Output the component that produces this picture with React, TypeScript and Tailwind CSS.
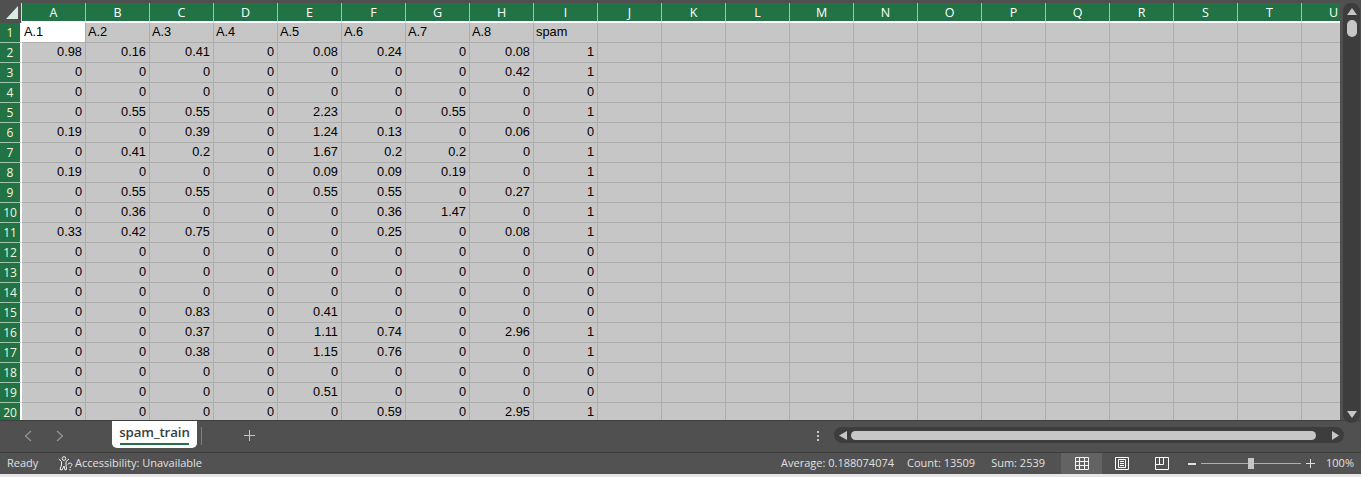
import React from "react";

const cols = "ABCDEFGHIJKLMNOPQRSTU".split("");
const data: (string | number)[][] = [
  ["A.1", "A.2", "A.3", "A.4", "A.5", "A.6", "A.7", "A.8", "spam"],
  [0.98, 0.16, 0.41, 0, 0.08, 0.24, 0, 0.08, 1],
  [0, 0, 0, 0, 0, 0, 0, 0.42, 1],
  [0, 0, 0, 0, 0, 0, 0, 0, 0],
  [0, 0.55, 0.55, 0, 2.23, 0, 0.55, 0, 1],
  [0.19, 0, 0.39, 0, 1.24, 0.13, 0, 0.06, 0],
  [0, 0.41, 0.2, 0, 1.67, 0.2, 0.2, 0, 1],
  [0.19, 0, 0, 0, 0.09, 0.09, 0.19, 0, 1],
  [0, 0.55, 0.55, 0, 0.55, 0.55, 0, 0.27, 1],
  [0, 0.36, 0, 0, 0, 0.36, 1.47, 0, 1],
  [0.33, 0.42, 0.75, 0, 0, 0.25, 0, 0.08, 1],
  [0, 0, 0, 0, 0, 0, 0, 0, 0],
  [0, 0, 0, 0, 0, 0, 0, 0, 0],
  [0, 0, 0, 0, 0, 0, 0, 0, 0],
  [0, 0, 0.83, 0, 0.41, 0, 0, 0, 0],
  [0, 0, 0.37, 0, 1.11, 0.74, 0, 2.96, 1],
  [0, 0, 0.38, 0, 1.15, 0.76, 0, 0, 1],
  [0, 0, 0, 0, 0, 0, 0, 0, 0],
  [0, 0, 0, 0, 0.51, 0, 0, 0, 0],
  [0, 0, 0, 0, 0, 0.59, 0, 2.95, 1],
];

function Cell({ v, selected }: { v?: string | number; selected?: boolean }) {
  const isNum = typeof v === "number";
  return (
    <div
      className={`h-[20px] border-r border-b border-[#adadad] leading-[18px] text-[12.8px] text-black whitespace-nowrap overflow-hidden ${
        isNum ? "text-right pr-[3px]" : "text-left pl-[2px]"
      } ${selected ? "bg-white" : "bg-[#c6c6c6]"}`}
    >
      {v}
    </div>
  );
}

export default function App() {
  return (
    <div className="w-[1361px] h-[477px] overflow-hidden flex flex-col bg-[#505050] font-['Liberation_Sans',Arial,sans-serif]">
      <div className="h-[3px] shrink-0 bg-[#505050]" />
      <div className="flex h-[417px] shrink-0">
        <div className="w-[1340px] h-[417px] overflow-hidden shrink-0 grid grid-cols-[22px_repeat(21,64px)] auto-rows-[20px] content-start">
          {/* corner */}
          <div className="h-[20px] bg-[#505050] border-r border-[#d8d8d8] flex items-start pl-[6px] pt-[3px]">
            <svg width="12" height="13" viewBox="0 0 12 13">
              <polygon points="12,0 12,13 0,13" fill="#d8ece2" />
            </svg>
          </div>
          {cols.map((c) => (
            <div
              key={c}
              className="h-[20px] bg-[#217346] border-r border-[#9fc5ae] border-b-2 border-b-white text-center text-white text-[12.5px] leading-[19px] font-['Open_Sans',sans-serif]"
            >
              {c}
            </div>
          ))}
          {data.map((row, r) => (
            <React.Fragment key={r}>
              <div className="h-[20px] bg-[#217346] border-r-2 border-r-white border-b border-[#9fc5ae] text-center text-[#f5f5dc] text-[12px] leading-[19px] font-['Open_Sans',sans-serif]">
                {r + 1}
              </div>
              {cols.map((c, i) => (
                <Cell key={c} v={row[i]} selected={r === 0 && i === 0} />
              ))}
            </React.Fragment>
          ))}
        </div>
        {/* vertical scrollbar */}
        <div className="relative w-[21px] pl-[3px] pr-[1px]">
          <div className="relative h-[420px] rounded-[8px] bg-[#3d3d3d] flex flex-col items-center">
            <svg width="10" height="7" viewBox="0 0 10 7" className="mt-[5px]">
              <polygon points="5,0 10,7 0,7" fill="#c6c6c6" />
            </svg>
            <div className="mt-[5px] w-[10px] h-[17px] rounded-[5px] bg-[#c6c6c6]" />
            <svg width="10" height="7" viewBox="0 0 10 7" className="mt-auto mb-[5px]">
              <polygon points="0,0 10,0 5,7" fill="#c6c6c6" />
            </svg>
          </div>
        </div>
      </div>

      {/* sheet tab bar */}
      <div className="h-[33px] shrink-0 flex border-t border-[#3d3d3d] border-b border-b-[#3d3d3d] text-[#c6c6c6]">
        <div className="flex items-start pt-[8px] pl-[23px] w-[112px] shrink-0">
          <svg width="10" height="14" viewBox="0 0 10 14" fill="none" stroke="#969696" strokeWidth="1.2">
            <path d="M8 2 L2.5 7 L8 12" />
          </svg>
          <svg width="10" height="14" viewBox="0 0 10 14" fill="none" stroke="#969696" strokeWidth="1.2" className="ml-[22px]">
            <path d="M2 2 L7.5 7 L2 12" />
          </svg>
        </div>
        <div className="w-[85px] h-[27px] shrink-0 bg-white rounded-b-[5px] flex flex-col items-center">
          <div className="text-[13.3px] leading-[20px] mt-[1px] font-semibold text-[#3c3c3c] font-['Open_Sans',sans-serif] tracking-[-0.1px]">spam_train</div>
          <div className="w-[69px] h-[2px] bg-[#217346] mt-[1px]" />
        </div>
        <div className="w-px h-[18px] bg-[#808080] ml-[4px] mt-[6px]" />
        <svg width="11" height="11" viewBox="0 0 11 11" stroke="#c6c6c6" strokeWidth="1" className="ml-[42px] mt-[9px]">
          <path d="M5.5 0 V11 M0 5.5 H11" />
        </svg>
        <div className="ml-[562px] mt-[10px] flex flex-col gap-[2px]">
          <div className="w-[2px] h-[2px] bg-[#c6c6c6]" />
          <div className="w-[2px] h-[2px] bg-[#c6c6c6]" />
          <div className="w-[2px] h-[2px] bg-[#c6c6c6]" />
        </div>
        {/* horizontal scrollbar */}
        <div className="ml-[15px] mt-[6px] w-[510px] h-[16px] rounded-[8px] bg-[#3d3d3d] flex items-center pl-[5px] pr-[5px]">
          <svg width="8" height="9" viewBox="0 0 8 9">
            <polygon points="0,4.5 8,0 8,9" fill="#c6c6c6" />
          </svg>
          <div className="ml-[4px] w-[465px] h-[9px] rounded-[5px] bg-[#c6c6c6]" />
          <svg width="7" height="9" viewBox="0 0 7 9" className="ml-auto">
            <polygon points="7,4.5 0,0 0,9" fill="#c6c6c6" />
          </svg>
        </div>
      </div>

      {/* status bar */}
      <div className="h-[21px] shrink-0 flex items-center justify-between bg-[#525252] text-[11px] text-[#e0e0e0] font-['Open_Sans',sans-serif]">
        <div className="flex items-center">
          <span className="ml-[7px] w-[51px]">Ready</span>
          <svg width="15" height="15" viewBox="0 0 15 15" fill="none" stroke="#f0f0f0" strokeWidth="1">
            <circle cx="6" cy="2.5" r="1.8" />
            <path d="M.8 3 L3.5 5.5 V9 L2 13.5 L4 14 L6 10 L7 14 L8.5 13.5 L8 9 V5.5 L11 3" />
            <path d="M10 8.5 C10 6.6 14 6.6 14 8.7 C14 10.3 12 10.2 12 12 M12 13 V14.5" />
          </svg>
          <span className="ml-[2px]">Accessibility: Unavailable</span>
        </div>
        <div className="flex items-center pr-[7px]">
          <span>Average: 0.188074074</span>
          <span className="ml-[13px]">Count: 13509</span>
          <span className="ml-[16px]">Sum: 2539</span>
          <div className="ml-[16px] w-[41px] h-[21px] bg-[#636363] flex items-center justify-center">
            <svg width="14" height="13" viewBox="0 0 14 13" fill="none" stroke="#f4f4f4" strokeWidth="1">
              <path d="M.5 .5 H13.5 V12.5 H.5 Z M.5 4.5 H13.5 M.5 8.5 H13.5 M4.5 .5 V12.5 M9.5 .5 V12.5" />
            </svg>
          </div>
          <svg width="14" height="13" viewBox="0 0 14 13" fill="none" stroke="#ffffff" strokeWidth="1" className="ml-[13px]">
            <path d="M.5 .5 H13.5 V12.5 H.5 Z M3.5 2.5 H10.5 V10.5 H3.5 Z M5 4.5 H9 M5 6.5 H9 M5 8.5 H9" />
          </svg>
          <svg width="14" height="13" viewBox="0 0 14 13" fill="none" stroke="#ffffff" strokeWidth="1" className="ml-[26px]">
            <path d="M.5 .5 V12.5 H13.5 V.5 H.5 M4.5 .5 V7 M8.5 .5 V7.5 H.5" />
          </svg>
          <div className="ml-[19px] w-[8px] h-[2px] bg-[#dedede]" />
          <div className="ml-[5px] relative w-[100px] h-px bg-[#b0b0b0]">
            <div className="absolute left-[47px] top-[-5px] w-[6px] h-[11px] bg-[#c6c6c6]" />
          </div>
          <svg width="9" height="9" viewBox="0 0 9 9" stroke="#dedede" strokeWidth="1" className="ml-[5px]">
            <path d="M4.5 0 V9 M0 4.5 H9" />
          </svg>
          <span className="ml-[11px]">100%</span>
        </div>
      </div>
      <div className="flex-1 bg-[#e6e6e6]" />
    </div>
  );
}
